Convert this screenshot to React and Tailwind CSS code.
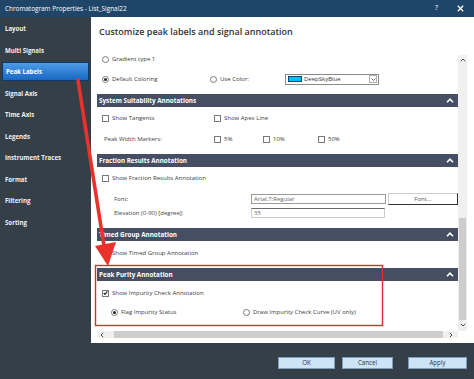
import React from 'react';

const font = { fontFamily: '"Open Sans", "Noto Sans", sans-serif' };

const Check = ({ checked }) => (
  <span className="w-[7px] h-[7px] border border-[#7a7a7a] bg-white flex items-center justify-center shrink-0">
    {checked && (
      <svg width="6" height="6" viewBox="0 0 6 6">
        <path d="M0.8 3 L2.4 4.6 L5.3 1" stroke="#222" strokeWidth="1.3" fill="none" />
      </svg>
    )}
  </span>
);

const Radio = ({ checked }) => (
  <span className="w-[7px] h-[7px] rounded-full border border-[#7a7a7a] bg-white flex items-center justify-center shrink-0">
    {checked && <span className="w-[3px] h-[3px] rounded-full bg-[#222]" />}
  </span>
);

const Option = ({ type = 'check', checked, label, className = '' }) => (
  <div className={`flex items-center gap-[3px] ${className}`}>
    {type === 'check' ? <Check checked={checked} /> : <Radio checked={checked} />}
    <span className="text-[6px] text-[#3a3a3a] whitespace-nowrap">{label}</span>
  </div>
);

const SectionHeader = ({ title, className = '' }) => (
  <div className={`h-[13px] bg-[#454e63] flex items-center justify-between pl-[2px] pr-[4px] ${className}`}>
    <span className="text-[6.3px] font-bold text-white whitespace-nowrap">{title}</span>
    <svg width="8" height="5" viewBox="0 0 8 5">
      <path d="M1 4.2 L4 1.2 L7 4.2" stroke="#fff" strokeWidth="1.6" fill="none" />
    </svg>
  </div>
);

const Sidebar = () => {
  const items = ['Layout', 'Multi Signals', 'Peak Labels', 'Signal Axis', 'Time Axis', 'Legends', 'Instrument Traces', 'Format', 'Filtering', 'Sorting'];
  return (
    <div className="w-[91px] bg-[#353f48] pt-[1px] shrink-0">
      {items.map((name) => (
        <div key={name} className="h-[21.5px] flex items-center">
          {name === 'Peak Labels' ? (
            <div className="mx-[2px] flex-1 h-[19px] flex items-center pl-[3px] border border-[#0d3a6e] bg-gradient-to-b from-[#4d9ce6] to-[#1767c4]">
              <span className="text-[6.1px] font-bold text-white">{name}</span>
            </div>
          ) : (
            <span className="pl-[5px] text-[6.1px] font-bold text-[#eef0f2]">{name}</span>
          )}
        </div>
      ))}
    </div>
  );
};

const Content = () => (
  <div className="flex-1 flex flex-col">
    <Option type="radio" label="Gradient type 1" className="h-[9px] pl-[5px]" />

    <div className="h-[12px] mt-[9px] pl-[5px] flex items-center">
      <Option type="radio" checked label="Default Coloring" className="w-[108px]" />
      <Option type="radio" label="Use Color:" className="w-[75px]" />
      <div className="w-[94px] h-[11px] border border-[#8a8a8a] bg-white flex items-center pl-[2px] gap-[2px]">
        <span className="w-[14px] h-[6px] bg-[#00bfff] border border-[#1c3f66]" />
        <span className="text-[6px] text-[#333] flex-1">DeepSkyBlue</span>
        <span className="w-[8px] h-[8px] mr-[1px] border border-[#b0b0b0] flex items-center justify-center">
          <svg width="5" height="3" viewBox="0 0 5 3">
            <path d="M0.5 0.5 L2.5 2.5 L4.5 0.5" stroke="#555" strokeWidth="0.9" fill="none" />
          </svg>
        </span>
      </div>
    </div>

    <SectionHeader title="System Suitability Annotations" className="mt-[9px]" />
    <div className="h-[10px] mt-[6px] pl-[5px] flex items-center">
      <Option label="Show Tangents" className="w-[112px]" />
      <Option label="Show Apex Line" />
    </div>
    <div className="h-[10px] mt-[11px] pl-[7px] flex items-center">
      <span className="w-[110px] text-[6px] text-[#444]">Peak Width Markers:</span>
      <Option label="5%" className="w-[49px]" />
      <Option label="10%" className="w-[55px]" />
      <Option label="50%" />
    </div>

    <SectionHeader title="Fraction Results Annotation" className="mt-[10px]" />
    <Option label="Show Fraction Results Annotation" className="h-[10px] mt-[6px] pl-[5px]" />
    <div className="h-[12px] mt-[10px] flex items-center">
      <span className="w-[154px] pl-[17px] text-[6px] text-[#444]">Font:</span>
      <div className="w-[135px] h-[10px] border border-[#9a9a9a] flex items-center pl-[2px]">
        <span className="text-[6px] text-[#666]">Arial;7;Regular</span>
      </div>
      <div className="ml-[2px] w-[70px] h-[12px] border border-[#cfcfcf] border-r-[#333] border-b-[#333] border-r-[1.5px] border-b-[1.5px] bg-white flex items-center justify-center">
        <span className="text-[6px] text-[#555]">Font...</span>
      </div>
    </div>
    <div className="h-[10px] mt-[3px] flex items-center">
      <span className="w-[154px] pl-[17px] text-[6px] text-[#444]">Elevation (0-90) [degree]:</span>
      <div className="w-[134px] h-[10px] border border-[#cdcdcd] border-t-[#6a6a6a] flex items-center pl-[2px]">
        <span className="text-[6px] text-[#666]">35</span>
      </div>
    </div>

    <SectionHeader title="Timed Group Annotation" className="mt-[10px]" />
    <Option label="Show Timed Group Annotation" className="h-[10px] mt-[7px] pl-[5px]" />

    <SectionHeader title="Peak Purity Annotation" className="mt-[10px] h-[12px]" />
    <Option checked label="Show Impurity Check Annotation" className="h-[10px] mt-[7px] pl-[5px]" />
    <div className="h-[10px] mt-[9px] pl-[14px] flex items-center">
      <Option type="radio" checked label="Flag Impurity Status" className="w-[132px]" />
      <Option type="radio" label="Draw Impurity Check Curve (UV only)" />
    </div>
  </div>
);

const VScroll = () => (
  <div className="w-[9px] bg-[#f0f0f0] flex flex-col items-center">
    <svg width="6" height="4" viewBox="0 0 6 4" className="mt-[3px]">
      <path d="M0.8 3.2 L3 1 L5.2 3.2" stroke="#444" strokeWidth="1" fill="none" />
    </svg>
    <div className="mt-[156px] w-[7px] h-[102px] bg-[#cdcdcd]" />
    <svg width="6" height="4" viewBox="0 0 6 4" className="mt-[3px]">
      <path d="M0.8 0.8 L3 3 L5.2 0.8" stroke="#444" strokeWidth="1" fill="none" />
    </svg>
  </div>
);

const HScroll = () => (
  <div className="w-[361px] h-[7px] bg-[#f0f0f0] flex items-center">
    <svg width="4" height="6" viewBox="0 0 4 6" className="ml-[3px]">
      <path d="M3.2 0.8 L1 3 L3.2 5.2" stroke="#444" strokeWidth="1" fill="none" />
    </svg>
    <div className="ml-[10px] w-[329px] h-[7px] bg-[#cdcdcd]" />
    <svg width="4" height="6" viewBox="0 0 4 6" className="ml-[6px]">
      <path d="M0.8 0.8 L3 3 L0.8 5.2" stroke="#444" strokeWidth="1" fill="none" />
    </svg>
  </div>
);

const FooterButton = ({ label, className = '' }) => (
  <button className={`h-[12px] bg-[#cde4f7] border border-[#7f9dbd] flex items-center justify-center ${className}`}>
    <span className="text-[6.2px] text-[#333]">{label}</span>
  </button>
);

const App = () => {
  return (
    <div className="w-[474px] h-[379px] relative overflow-hidden flex flex-col bg-[#353f48]" style={font}>
      {/* Title bar */}
      <div className="h-[17px] bg-[#1f4669] flex items-center pl-[5px] pr-[10px] shrink-0">
        <span className="text-[6.4px] text-white flex-1">Chromatogram Properties - List_Signal22</span>
        <span className="text-[7px] text-white mr-[19px]">?</span>
        <svg width="7" height="7" viewBox="0 0 7 7">
          <path d="M0.8 0.8 L6.2 6.2 M6.2 0.8 L0.8 6.2" stroke="#fff" strokeWidth="1.3" />
        </svg>
      </div>

      {/* Body */}
      <div className="h-[326px] flex shrink-0">
        <Sidebar />
        <div className="flex-1 bg-white pl-[6px] pr-[7px] flex flex-col">
          <div className="h-[30px] flex items-center pl-[2px]">
            <span className="text-[9px] font-semibold text-[#333]">Customize peak labels and signal annotation</span>
          </div>
          <div className="mt-[8px] h-[276px] flex">
            <Content />
            <VScroll />
          </div>
          <HScroll />
        </div>
      </div>

      {/* Footer */}
      <div className="flex-1 flex items-start pt-[14px] pl-[278px]">
        <FooterButton label="OK" className="w-[57px]" />
        <FooterButton label="Cancel" className="w-[51px] ml-[7px]" />
        <FooterButton label="Apply" className="w-[59px] ml-[15px]" />
      </div>

      {/* Annotation overlay */}
      <svg className="absolute inset-0 pointer-events-none" width="474" height="379" viewBox="0 0 474 379">
        <rect x="95.5" y="265.5" width="287" height="60" fill="none" stroke="#e42a2a" strokeWidth="1.4" />
        <line x1="78" y1="80" x2="104" y2="246" stroke="#e8322b" strokeWidth="3.6" strokeLinecap="round" />
        <polygon points="95,246 116,242 108,266" fill="#e8322b" />
      </svg>
    </div>
  );
};

export default App;
